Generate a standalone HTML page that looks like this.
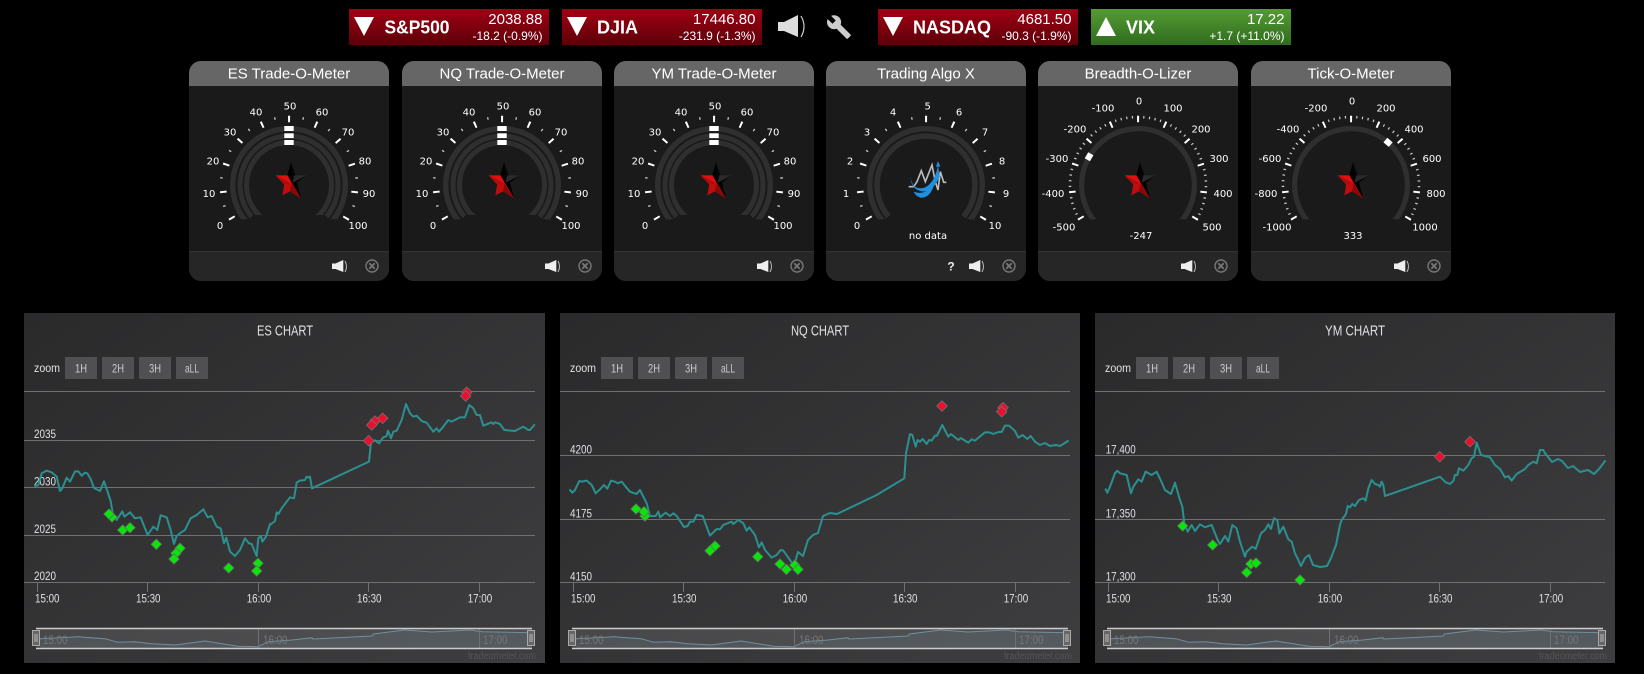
<!DOCTYPE html>
<html><head><meta charset="utf-8"><title>Trade-O-Meter</title>
<style>
html,body{margin:0;padding:0;background:#000;width:1644px;height:674px;overflow:hidden}
svg{display:block}
text{font-family:"Liberation Sans",sans-serif}
.sym{font-size:18px;font-weight:bold;fill:#fff}
.pr{font-size:15px;fill:#fff;text-anchor:end}
.ch{font-size:12px;fill:#fff;text-anchor:end}
.ti{font-size:15px;fill:#fff;text-anchor:middle}
.g text{font-family:"DejaVu Sans",sans-serif;font-size:10px;fill:#fff;text-anchor:middle;dominant-baseline:central}
.cv{font-family:"DejaVu Sans",sans-serif;font-size:10px;fill:#fff;text-anchor:middle}
.ct{font-size:15px;fill:#E0E0E3;text-anchor:middle}
.cl{font-size:12px;fill:#E0E0E3}
.zb{font-size:12px;fill:#ccc;text-anchor:middle}
.nl{font-size:12px;fill:#777}
.cr{font-size:10px;fill:#555}
.ln{fill:none;stroke:#2b908f;stroke-width:6;stroke-linejoin:round;stroke-linecap:round}
.ln2{fill:none;stroke:#2b908f;stroke-width:2;stroke-linejoin:round;stroke-linecap:round}
.gl{stroke:#707073;stroke-width:1}
</style></head><body>
<svg width="1644" height="674" viewBox="0 0 1644 674" xmlns="http://www.w3.org/2000/svg">
<defs>
<linearGradient id="rd" x1="0" y1="0" x2="0" y2="1"><stop offset="0" stop-color="#a00014"/><stop offset="1" stop-color="#5c0008"/></linearGradient>
<linearGradient id="gr" x1="0" y1="0" x2="0" y2="1"><stop offset="0" stop-color="#559c33"/><stop offset="1" stop-color="#2f6b1f"/></linearGradient>
<linearGradient id="cb" x1="0" y1="0" x2="1" y2="1"><stop offset="0" stop-color="#2a2a2b"/><stop offset="1" stop-color="#3e3e40"/></linearGradient>
<clipPath id="rc"><polygon points="-70,-70 70,-70 70,36 40,34 36,30 -36,30 -40,34 -70,36"/></clipPath>
<g id="major"><circle r="66" fill="none" stroke="#fff" stroke-width="6.6" stroke-dasharray="2 25.65 2 25.65 2 25.65 2 25.65 2 25.65 2 25.65 2 25.65 2 25.65 2 25.65 2 25.65 2 400" transform="rotate(-210.87)"/></g>
<g id="minor12"><circle r="68" fill="none" stroke="#ccc" stroke-width="2.6" stroke-dasharray="1.3 27.18 1.3 27.18 1.3 27.18 1.3 27.18 1.3 27.18 1.3 27.18 1.3 27.18 1.3 27.18 1.3 27.18 1.3 400" transform="rotate(-198.55)"/></g>
<g id="minor5"><circle r="68" fill="none" stroke="#ccc" stroke-width="2.6" stroke-dasharray="1.2 4.5 1.2 4.5 1.2 4.5 1.2 10.2 1.2 4.5 1.2 4.5 1.2 4.5 1.2 10.2 1.2 4.5 1.2 4.5 1.2 4.5 1.2 10.2 1.2 4.5 1.2 4.5 1.2 4.5 1.2 10.2 1.2 4.5 1.2 4.5 1.2 4.5 1.2 10.2 1.2 4.5 1.2 4.5 1.2 4.5 1.2 10.2 1.2 4.5 1.2 4.5 1.2 4.5 1.2 10.2 1.2 4.5 1.2 4.5 1.2 4.5 1.2 10.2 1.2 4.5 1.2 4.5 1.2 4.5 1.2 10.2 1.2 4.5 1.2 4.5 1.2 4.5 1.2 400" transform="rotate(-205.7)"/></g>
<g id="ring1" clip-path="url(#rc)"><circle r="56.4" fill="none" stroke="#2f2f2f" stroke-width="5.2"/></g>
<g id="ring2" clip-path="url(#rc)"><circle r="56.3" fill="none" stroke="#2f2f2f" stroke-width="5.4"/><circle r="49" fill="none" stroke="#2f2f2f" stroke-width="5.6"/></g>
<g id="ring3" clip-path="url(#rc)"><circle r="56.3" fill="none" stroke="#2f2f2f" stroke-width="5.4"/><circle r="49" fill="none" stroke="#2f2f2f" stroke-width="5"/><circle r="42.5" fill="none" stroke="#2f2f2f" stroke-width="5"/></g>
<g id="mk3" fill="#fff"><rect x="-4.7" y="-59" width="9.4" height="5"/><rect x="-4.7" y="-51.7" width="9.4" height="4.8"/><rect x="-4.7" y="-45" width="9.4" height="5"/></g>
<g id="star" transform="translate(-114,-135) scale(.3333)">
<polygon points="348,338 336,378 352,402 362,378" fill="#000"/>
<polygon points="348,338 362,378 352,402" fill="#050505"/>
<polygon points="358,376 395,376 366,398 352,400" fill="#2a2a2a"/>
<polygon points="395,376 366,398 378,445 350,400" fill="#000"/>
<polygon points="302,376 338,376 352,402 328,404" fill="#e01010"/>
<polygon points="302,376 328,404 352,402 322,386" fill="#b00c0c"/>
<polygon points="328,402 352,400 378,445 345,424 322,436" fill="#c00c0c"/>
<polygon points="350,400 378,445 345,424" fill="#8c0808"/>
</g>
<g id="spk"><rect x="143" y="202.5" width="4" height="5.5" fill="#eee"/><polygon points="146.5,202.5 154.3,199 154.3,211 146.5,208" fill="#eee"/><path d="M156 200Q159 205.500 156 211" fill="none" stroke="#bbb" stroke-width="1"/></g>
<g id="cx" fill="none" stroke="#777" stroke-width="1.4"><circle cx="183" cy="205" r="6"/><path d="M180.300 202.300l5.400 5.400M185.700 202.300l-5.400 5.400" stroke-width="1.800"/></g>
<g id="card">
<rect width="200" height="220" rx="12" fill="#1a1a1a"/>
<path d="M0 25V12A12 12 0 0 1 12 0H188A12 12 0 0 1 200 12V25Z" fill="#666"/>
<path d="M0 190H200V208A12 12 0 0 1 188 220H12A12 12 0 0 1 0 208Z" fill="#262626"/>
<path d="M0 190.500H200" stroke="#333" stroke-width="1"/>
</g>
<path id="dg" d="M0-5.300 5.300 0 0 5.300-5.300 0Z" fill="#0ae40a" stroke="#666" stroke-width=".7"/>
<path id="dr" d="M0-5.300 5.300 0 0 5.300-5.300 0Z" fill="#e8102e" stroke="#777" stroke-width=".7"/>
<g id="nav">
<rect x="12" y="315" width="496" height="20" fill="#fff" fill-opacity=".1"/>
<path d="M16 325.700L54 323.700 81 325.700 94 329.300 111 328.700 128 330.700 151 332 181 328 214 333.300 234 333.700 244 328.700 268 327 288 324.700 289 326 348 323 349.300 321 381 317 408 319 446 317 458 318.700 508 319.700V335H16Z" fill="#6a7f8c" fill-opacity=".22"/>
<path d="M16 325.700L54 323.700 81 325.700 94 329.300 111 328.700 128 330.700 151 332 181 328 214 333.300 234 333.700 244 328.700 268 327 288 324.700 289 326 348 323 349.300 321 381 317 408 319 446 317 458 318.700 508 319.700" fill="none" stroke="#6f8f9f" stroke-width="1"/>
<path d="M234.500 315V335M455.500 315V335" stroke="#707073" stroke-width="1"/>
<path d="M12 315.500H508M12 335.500H508" stroke="#ccc" stroke-width="1.400"/>
<rect x="8.500" y="317.500" width="7" height="15" fill="#666" stroke="#aaa"/>
<path d="M11 321V329M13 321V329" stroke="#ccc" stroke-width=".8"/>
<rect x="503.500" y="317.500" width="7" height="15" fill="#666" stroke="#aaa"/>
<path d="M506 321V329M508 321V329" stroke="#ccc" stroke-width=".8"/>
</g>
<g id="xax" stroke="#707073" stroke-width="1"><path d="M13.500 269.500V279M123.500 269.500V279M234.500 269.500V279M344.500 269.500V279M455.500 269.500V279"/></g>
<g id="zb" fill="#505053"><rect x="41" y="44" width="32" height="22"/><rect x="78" y="44" width="32" height="22"/><rect x="115" y="44" width="32" height="22"/><rect x="152" y="44" width="32" height="22"/></g>
</defs>

<!-- top bar -->
<rect x="349" y="9" width="200" height="36" fill="url(#rd)"/>
<polygon points="354,17 374,17 364,36" fill="#fff"/>
<text class="sym" x="384.500" y="33.500" textLength="65" lengthAdjust="spacingAndGlyphs">S&amp;P500</text>
<text class="pr" x="542.500" y="24">2038.88</text>
<text class="ch" x="542.500" y="40">-18.2 (-0.9%)</text>

<rect x="562" y="9" width="200" height="36" fill="url(#rd)"/>
<polygon points="567,17 587,17 577,36" fill="#fff"/>
<text class="sym" x="597" y="33.500">DJIA</text>
<text class="pr" x="755.500" y="24">17446.80</text>
<text class="ch" x="755.500" y="40">-231.9 (-1.3%)</text>

<rect x="778" y="22" width="8" height="9" fill="#ddd"/>
<polygon points="784,22 798,15 798,37 784,31" fill="#ddd"/>
<path d="M801 16Q807 26.500 801 37" fill="none" stroke="#ccc" stroke-width="1.200"/>
<path transform="translate(826,14) scale(1.080)" d="M22.700 19l-9.100-9.100c.9-2.300.4-5-1.500-6.900-2-2-5-2.400-7.400-1.300L9 6 6 9 1.600 4.700C.4 7.100.9 10.100 2.900 12.100c1.900 1.900 4.600 2.400 6.900 1.500l9.100 9.100c.4.400 1 .4 1.400 0l2.300-2.300c.5-.4.5-1.100.1-1.400z" fill="#ccc"/>

<rect x="878" y="9" width="200" height="36" fill="url(#rd)"/>
<polygon points="883,17 903,17 893,36" fill="#fff"/>
<text class="sym" x="913" y="33.500">NASDAQ</text>
<text class="pr" x="1071.500" y="24">4681.50</text>
<text class="ch" x="1071.500" y="40">-90.3 (-1.9%)</text>

<rect x="1091" y="9" width="200" height="36" fill="url(#gr)"/>
<polygon points="1096,36 1116,36 1106,17" fill="#fff"/>
<text class="sym" x="1126" y="33.500">VIX</text>
<text class="pr" x="1284.500" y="24">17.22</text>
<text class="ch" x="1284.500" y="40">+1.7 (+11.0%)</text>

<!-- gauge 1 -->
<g transform="translate(189,61)"><use href="#card"/><text class="ti" x="100" y="17.500">ES Trade-O-Meter</text>
<g class="g" transform="translate(100,124)"><use href="#ring3"/><use href="#mk3"/><use href="#major"/><use href="#minor12"/><use href="#star"/>
<text x="-69" y="41.700">0</text><text x="-80" y="9.300">10</text><text x="-76" y="-23">20</text><text x="-59" y="-52">30</text><text x="-33" y="-72">40</text><text x="1" y="-78">50</text><text x="33" y="-72">60</text><text x="59" y="-52">70</text><text x="76" y="-23">80</text><text x="80" y="9.300">90</text><text x="69" y="41.700">100</text></g>
<use href="#spk"/><use href="#cx"/></g>
<!-- gauge 2 -->
<g transform="translate(402,61)"><use href="#card"/><text class="ti" x="100" y="17.500">NQ Trade-O-Meter</text>
<g class="g" transform="translate(100,124)"><use href="#ring3"/><use href="#mk3"/><use href="#major"/><use href="#minor12"/><use href="#star"/>
<text x="-69" y="41.700">0</text><text x="-80" y="9.300">10</text><text x="-76" y="-23">20</text><text x="-59" y="-52">30</text><text x="-33" y="-72">40</text><text x="1" y="-78">50</text><text x="33" y="-72">60</text><text x="59" y="-52">70</text><text x="76" y="-23">80</text><text x="80" y="9.300">90</text><text x="69" y="41.700">100</text></g>
<use href="#spk"/><use href="#cx"/></g>
<!-- gauge 3 -->
<g transform="translate(614,61)"><use href="#card"/><text class="ti" x="100" y="17.500">YM Trade-O-Meter</text>
<g class="g" transform="translate(100,124)"><use href="#ring3"/><use href="#mk3"/><use href="#major"/><use href="#minor12"/><use href="#star"/>
<text x="-69" y="41.700">0</text><text x="-80" y="9.300">10</text><text x="-76" y="-23">20</text><text x="-59" y="-52">30</text><text x="-33" y="-72">40</text><text x="1" y="-78">50</text><text x="33" y="-72">60</text><text x="59" y="-52">70</text><text x="76" y="-23">80</text><text x="80" y="9.300">90</text><text x="69" y="41.700">100</text></g>
<use href="#spk"/><use href="#cx"/></g>
<!-- gauge 4 -->
<g transform="translate(826,61)"><use href="#card"/><text class="ti" x="100" y="17.500">Trading Algo X</text>
<g class="g" transform="translate(100,124)"><use href="#ring2"/><use href="#major"/><use href="#minor12"/>
<g transform="scale(.3333) translate(-422,-405)">
<polyline points="370,410 385,410 395,395 408,362 420,395 440,345 450,395 458,420 465,365 475,397 483,397" fill="none" stroke="#bbb" stroke-width="5"/>
<path d="M375 380Q382 425 420 412Q450 395 458 345L463 380Q440 430 410 424Q378 420 375 380Z" fill="#1f8fe0"/>
<path d="M385 425Q420 438 447 402Q435 445 405 443Q390 438 385 425Z" fill="#1f8fe0"/>
<polygon points="458,333 452,350 465,350" fill="#1f8fe0"/>
</g>
<text x="1.700" y="-78">5</text><text x="-33" y="-72">4</text><text x="33" y="-72">6</text><text x="-59" y="-52">3</text><text x="59" y="-52">7</text><text x="-76" y="-23">2</text><text x="76" y="-23">8</text><text x="-80" y="9.300">1</text><text x="80" y="9.300">9</text><text x="-69" y="41.700">0</text><text x="69" y="41.700">10</text></g>
<text class="cv" x="102" y="178">no data</text>
<text x="125" y="209.500" font-size="12" font-weight="bold" fill="#eee" text-anchor="middle">?</text>
<use href="#spk"/><use href="#cx"/></g>
<!-- gauge 5 -->
<g transform="translate(1038,61)"><use href="#card"/><text class="ti" x="100" y="17.500">Breadth-O-Lizer</text>
<g class="g" transform="translate(100,124)"><use href="#ring1"/><use href="#major"/><use href="#minor5"/><use href="#star"/>
<rect x="-3.500" y="-59.500" width="7" height="6" fill="#fff" transform="rotate(-60)"/>
<text x="1" y="-83">0</text><text x="-35" y="-76">-100</text><text x="35" y="-76">100</text><text x="-63" y="-55">-200</text><text x="63" y="-55">200</text><text x="-81" y="-25.700">-300</text><text x="81" y="-25.700">300</text><text x="-85" y="9.300">-400</text><text x="85" y="9.300">400</text><text x="-74" y="43">-500</text><text x="74" y="43">500</text></g>
<text class="cv" x="103" y="178">-247</text>
<use href="#spk"/><use href="#cx"/></g>
<!-- gauge 6 -->
<g transform="translate(1251,61)"><use href="#card"/><text class="ti" x="100" y="17.500">Tick-O-Meter</text>
<g class="g" transform="translate(100,124)"><use href="#ring1"/><use href="#major"/><use href="#minor5"/><use href="#star"/>
<rect x="-3.500" y="-59.500" width="7" height="6" fill="#fff" transform="rotate(41)"/>
<text x="1" y="-83">0</text><text x="-35" y="-76">-200</text><text x="35" y="-76">200</text><text x="-63" y="-55">-400</text><text x="63" y="-55">400</text><text x="-81" y="-25.700">-600</text><text x="81" y="-25.700">600</text><text x="-85" y="9.300">-800</text><text x="85" y="9.300">800</text><text x="-74" y="43">-1000</text><text x="74" y="43">1000</text></g>
<text class="cv" x="102" y="178">333</text>
<use href="#spk"/><use href="#cx"/></g>

<!-- chart 1 -->
<g transform="translate(24,313)">
<rect width="521" height="350" fill="url(#cb)"/>
<text class="ct" x="261" y="22.500" textLength="56" lengthAdjust="spacingAndGlyphs">ES CHART</text>
<text class="cl" x="10" y="59" textLength="26" lengthAdjust="spacingAndGlyphs">zoom</text>
<use href="#zb"/>
<text class="zb" x="57" y="59.500" textLength="12" lengthAdjust="spacingAndGlyphs">1H</text><text class="zb" x="94" y="59.500" textLength="12" lengthAdjust="spacingAndGlyphs">2H</text><text class="zb" x="131" y="59.500" textLength="12" lengthAdjust="spacingAndGlyphs">3H</text><text class="zb" x="168" y="59.500" textLength="14" lengthAdjust="spacingAndGlyphs">aLL</text>
<path class="gl" d="M0 78.500H511M0 127.500H511M0 174.500H511M0 222.500H511M0 269.500H511"/>
<use href="#xax"/>
<text class="cl" x="10" y="125" textLength="22" lengthAdjust="spacingAndGlyphs">2035</text><text class="cl" x="10" y="172.700" textLength="22" lengthAdjust="spacingAndGlyphs">2030</text><text class="cl" x="10" y="220" textLength="22" lengthAdjust="spacingAndGlyphs">2025</text><text class="cl" x="10" y="267" textLength="22" lengthAdjust="spacingAndGlyphs">2020</text>
<text class="cl" x="11" y="289.500" textLength="24.500" lengthAdjust="spacingAndGlyphs">15:00</text><text class="cl" x="112" y="289.500" textLength="24.500" lengthAdjust="spacingAndGlyphs">15:30</text><text class="cl" x="222.700" y="289.500" textLength="24.500" lengthAdjust="spacingAndGlyphs">16:00</text><text class="cl" x="333" y="289.500" textLength="24.500" lengthAdjust="spacingAndGlyphs">16:30</text><text class="cl" x="443.700" y="289.500" textLength="24.500" lengthAdjust="spacingAndGlyphs">17:00</text>
<use href="#nav"/>
<text class="nl" x="19" y="331" textLength="24.500" lengthAdjust="spacingAndGlyphs">15:00</text><text class="nl" x="239" y="331" textLength="24.500" lengthAdjust="spacingAndGlyphs">16:00</text><text class="nl" x="459" y="331" textLength="24.500" lengthAdjust="spacingAndGlyphs">17:00</text>
<text class="cr" x="444" y="346" textLength="68" lengthAdjust="spacingAndGlyphs">tradeometer.com</text>
</g>
<polyline class="ln" transform="translate(25,430) scale(.3333)" points="30,168 40,165 50,130 65,122 80,127 95,140 105,183 112,175 125,143 135,155 150,124 160,124 170,137 180,128 187,130 197,147 207,174 225,183 237,154 247,183 257,213 264,255 275,270 292,244 298,260 315,247 330,265 347,262 368,315 385,290 397,300 407,256 425,262 437,300 447,342 455,318 470,306 480,300 497,265 515,255 535,238 548,262 560,258 575,290 587,295 597,340 604,323 615,365 630,378 645,360 660,325 672,340 680,342 695,378 700,325 708,318 712,335 723,320 735,282"/>
<polyline class="ln" transform="translate(270,360) scale(.3333)" points="0,495 15,483 20,457 25,462 35,445 60,412 72,415 80,368 90,362 105,360 110,350 115,353 120,350 126,385 297,305 303,247 315,241 327,250 340,232 350,228 354,212 363,235 370,215 380,212 395,180 408,132 420,160 430,170 440,167 455,183 470,188 490,215 500,205 507,215 520,200 535,180 545,185 570,172 585,172 598,135 610,145 620,165 630,165 640,197 665,187 670,192 675,187 690,192 703,210 735,213 760,200 775,210 780,210 793,195"/>
<use href="#dg" x="112" y="517"/><use href="#dg" x="109" y="514"/><use href="#dg" x="122.700" y="530"/><use href="#dg" x="130" y="527.700"/><use href="#dg" x="156.300" y="544.300"/><use href="#dg" x="180" y="548.300"/><use href="#dg" x="176" y="553.300"/><use href="#dg" x="174" y="559"/><use href="#dg" x="228.700" y="568"/><use href="#dg" x="258" y="563.300"/><use href="#dg" x="256.700" y="571"/>
<use href="#dr" x="382.700" y="418.300"/><use href="#dr" x="375" y="421"/><use href="#dr" x="371.700" y="425"/><use href="#dr" x="368.700" y="440.700"/><use href="#dr" x="466.700" y="392.300"/><use href="#dr" x="465.700" y="396"/>

<!-- chart 2 -->
<g transform="translate(560,313)">
<rect width="520" height="350" fill="url(#cb)"/>
<text class="ct" x="260" y="22.500" textLength="58" lengthAdjust="spacingAndGlyphs">NQ CHART</text>
<text class="cl" x="10" y="59" textLength="26" lengthAdjust="spacingAndGlyphs">zoom</text>
<use href="#zb"/>
<text class="zb" x="57" y="59.500" textLength="12" lengthAdjust="spacingAndGlyphs">1H</text><text class="zb" x="94" y="59.500" textLength="12" lengthAdjust="spacingAndGlyphs">2H</text><text class="zb" x="131" y="59.500" textLength="12" lengthAdjust="spacingAndGlyphs">3H</text><text class="zb" x="168" y="59.500" textLength="14" lengthAdjust="spacingAndGlyphs">aLL</text>
<path class="gl" d="M0 78.500H510M0 142.500H510M0 206.500H510M0 269.500H510"/>
<use href="#xax"/>
<text class="cl" x="10" y="140.300" textLength="22" lengthAdjust="spacingAndGlyphs">4200</text><text class="cl" x="10" y="204.300" textLength="22" lengthAdjust="spacingAndGlyphs">4175</text><text class="cl" x="10" y="267.500" textLength="22" lengthAdjust="spacingAndGlyphs">4150</text>
<text class="cl" x="11" y="289.500" textLength="24.500" lengthAdjust="spacingAndGlyphs">15:00</text><text class="cl" x="112" y="289.500" textLength="24.500" lengthAdjust="spacingAndGlyphs">15:30</text><text class="cl" x="222.700" y="289.500" textLength="24.500" lengthAdjust="spacingAndGlyphs">16:00</text><text class="cl" x="333" y="289.500" textLength="24.500" lengthAdjust="spacingAndGlyphs">16:30</text><text class="cl" x="443.700" y="289.500" textLength="24.500" lengthAdjust="spacingAndGlyphs">17:00</text>
<use href="#nav"/>
<text class="nl" x="19" y="331" textLength="24.500" lengthAdjust="spacingAndGlyphs">15:00</text><text class="nl" x="239" y="331" textLength="24.500" lengthAdjust="spacingAndGlyphs">16:00</text><text class="nl" x="459" y="331" textLength="24.500" lengthAdjust="spacingAndGlyphs">17:00</text>
<text class="cr" x="444" y="346" textLength="68" lengthAdjust="spacingAndGlyphs">tradeometer.com</text>
</g>
<polyline class="ln" transform="translate(535,430) scale(.3333)" points="105,180 112,188 120,180 133,153 140,155 155,152 170,165 182,190 195,178 207,165 217,176 228,152 240,155 248,160 260,155 272,170 285,185 305,192 315,180 335,220 345,258 362,258 370,245 375,262 392,248 405,258 415,250 425,258 447,291 458,288 465,275 475,275 485,255 503,258 525,317 545,297 555,298 565,285 590,275 595,282 610,270 625,280 635,302 643,292 660,315 672,352 680,337 690,360 710,383 725,375 737,360 745,362 765,390"/>
<polyline class="ln2" points="790,560 794,566 798,552 803,556 808,540 813,535 818,533 823,516 830,513 837,514 844,510.600 876.700,495"/>
<polyline class="ln" transform="translate(785,370) scale(.3333)" points="275,375 358,325 363,250 375,192 382,195 392,230 398,210 405,215 413,207 425,222 432,210 440,212 450,197 456,197 472,165 490,200 498,192 520,210 527,204 550,218 560,208 570,212 600,187 612,187 625,192 640,186 650,186 660,167 672,167 690,183 700,203 713,195 727,207 737,198 750,215"/>
<polyline class="ln2" points="1035,441.700 1040,445 1045,443 1050,446 1056,445 1060,446 1068,441"/>
<use href="#dg" x="636" y="509"/><use href="#dg" x="645" y="516"/><use href="#dg" x="644" y="511.700"/><use href="#dg" x="715" y="546"/><use href="#dg" x="710" y="550.700"/><use href="#dg" x="757.700" y="556.700"/><use href="#dg" x="780" y="564"/><use href="#dg" x="786.400" y="569.400"/><use href="#dg" x="794.800" y="565"/><use href="#dg" x="798" y="569.400"/>
<use href="#dr" x="942" y="406"/><use href="#dr" x="1003" y="407.700"/><use href="#dr" x="1001.700" y="411.700"/>

<!-- chart 3 -->
<g transform="translate(1095,313)">
<rect width="520" height="350" fill="url(#cb)"/>
<text class="ct" x="260" y="22.500" textLength="60" lengthAdjust="spacingAndGlyphs">YM CHART</text>
<text class="cl" x="10" y="59" textLength="26" lengthAdjust="spacingAndGlyphs">zoom</text>
<use href="#zb"/>
<text class="zb" x="57" y="59.500" textLength="12" lengthAdjust="spacingAndGlyphs">1H</text><text class="zb" x="94" y="59.500" textLength="12" lengthAdjust="spacingAndGlyphs">2H</text><text class="zb" x="131" y="59.500" textLength="12" lengthAdjust="spacingAndGlyphs">3H</text><text class="zb" x="168" y="59.500" textLength="14" lengthAdjust="spacingAndGlyphs">aLL</text>
<path class="gl" d="M0 78.500H510M0 142.500H510M0 206.500H510M0 269.500H510"/>
<use href="#xax"/>
<text class="cl" x="10.700" y="140.300" textLength="30" lengthAdjust="spacingAndGlyphs">17,400</text><text class="cl" x="10.700" y="204.300" textLength="30" lengthAdjust="spacingAndGlyphs">17,350</text><text class="cl" x="10.700" y="267.500" textLength="30" lengthAdjust="spacingAndGlyphs">17,300</text>
<text class="cl" x="11" y="289.500" textLength="24.500" lengthAdjust="spacingAndGlyphs">15:00</text><text class="cl" x="112" y="289.500" textLength="24.500" lengthAdjust="spacingAndGlyphs">15:30</text><text class="cl" x="222.700" y="289.500" textLength="24.500" lengthAdjust="spacingAndGlyphs">16:00</text><text class="cl" x="333" y="289.500" textLength="24.500" lengthAdjust="spacingAndGlyphs">16:30</text><text class="cl" x="443.700" y="289.500" textLength="24.500" lengthAdjust="spacingAndGlyphs">17:00</text>
<use href="#nav"/>
<text class="nl" x="19" y="331" textLength="24.500" lengthAdjust="spacingAndGlyphs">15:00</text><text class="nl" x="239" y="331" textLength="24.500" lengthAdjust="spacingAndGlyphs">16:00</text><text class="nl" x="459" y="331" textLength="24.500" lengthAdjust="spacingAndGlyphs">17:00</text>
<text class="cr" x="444" y="346" textLength="68" lengthAdjust="spacingAndGlyphs">tradeometer.com</text>
</g>
<polyline class="ln" transform="translate(1045,430) scale(.3333)" points="182,178 187,188 195,170 210,130 217,122 225,130 245,135 258,190 265,170 280,148 290,155 302,125 320,135 335,125 347,150 360,180 378,192 390,158 405,210 412,230 418,280 428,305 440,285 450,303 465,283 480,292 500,285 518,330 525,342 540,318 550,335 562,285 575,295 585,335 600,380 605,365 622,350 632,357 648,310 660,300 670,283 678,297 687,265 697,270 703,310 715,290 730,328 740,335 750,370 760,390"/>
<polyline class="ln2" points="1298.300,560 1301,566 1305,558 1309,555 1313,565 1320,567 1327,566 1331,558 1336,545 1340,525"/>
<polyline class="ln" transform="translate(1295,400) scale(.3333)" points="135,375 140,360 153,342 158,318 165,322 172,312 180,318 192,300 205,295 212,302 220,265 230,240 240,252 250,255 255,260 260,245 265,255 270,288 435,230 452,247 465,252 475,243 480,225 487,225 492,205 505,212 520,195 530,175 537,170 545,128 558,165 570,168 585,172 600,195 615,207 630,232 640,228 650,242 665,222 690,207 700,195 715,185 725,190 735,150 745,150 750,160"/>
<polyline class="ln2" points="1545,453 1552,462 1558,459 1562,461 1568,468 1573,466 1580,472 1588,470 1594,474 1599,469 1605,461"/>
<use href="#dg" x="1182.700" y="526"/><use href="#dg" x="1212.700" y="545"/><use href="#dg" x="1246.700" y="572.500"/><use href="#dg" x="1250.900" y="564"/><use href="#dg" x="1256" y="563"/><use href="#dg" x="1300" y="580"/>
<use href="#dr" x="1439.700" y="456.700"/><use href="#dr" x="1470" y="441.700"/>
</svg>
</body></html>
